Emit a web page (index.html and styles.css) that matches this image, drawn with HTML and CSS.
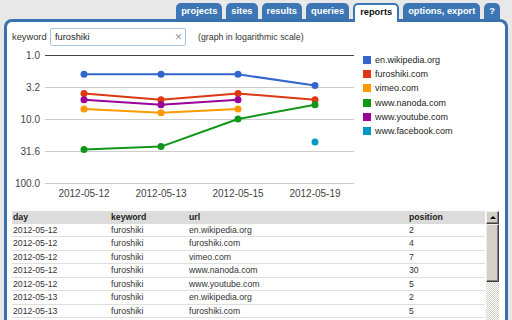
FILE: index.html
```html
<!DOCTYPE html>
<html>
<head>
<meta charset="utf-8">
<link rel="stylesheet" href="styles.css">
</head>
<body>
<div class="tabs">
  <div class="tab">projects</div>
  <div class="tab">sites</div>
  <div class="tab">results</div>
  <div class="tab">queries</div>
  <div class="tab active">reports</div>
  <div class="tab">options, export</div>
  <div class="tab">?</div>
</div>
<div class="panel">
  <div class="kwrow">
    <span class="kwlabel">keyword</span>
    <div class="input"><span class="val">furoshiki</span><span class="clear">×</span></div>
    <span class="note">(graph in logarithmic scale)</span>
  </div>
  <div class="chartrow">
    <svg class="chart" width="348" height="155" viewBox="7 48 348 155">
      <line x1="45" x2="354" y1="55.5" y2="55.5" stroke="#444" stroke-width="1"/>
      <line x1="45" x2="354" y1="87.5" y2="87.5" stroke="#ccc" stroke-width="1"/>
      <line x1="45" x2="354" y1="119.5" y2="119.5" stroke="#ccc" stroke-width="1"/>
      <line x1="45" x2="354" y1="151.5" y2="151.5" stroke="#ccc" stroke-width="1"/>
      <line x1="45" x2="354" y1="183.5" y2="183.5" stroke="#ccc" stroke-width="1"/>
      <g class="ylab" text-anchor="end">
        <text x="40" y="59">1.0</text>
        <text x="40" y="91">3.2</text>
        <text x="40" y="123">10.0</text>
        <text x="40" y="155">31.6</text>
        <text x="40" y="187">100.0</text>
      </g>
      <g class="xlab" text-anchor="middle">
        <text x="84" y="197">2012-05-12</text>
        <text x="161" y="197">2012-05-13</text>
        <text x="238" y="197">2012-05-15</text>
        <text x="315" y="197">2012-05-19</text>
      </g>
      <g fill="none" stroke-width="2" stroke-linejoin="round">
        <polyline stroke="#3366cc" points="84,74.3 161,74.3 238,74.3 315,85.5"/>
        <polyline stroke="#dc3912" points="84,93.5 161,99.7 238,93.5 315,99.7"/>
        <polyline stroke="#ff9900" points="84,109.1 161,112.8 238,109.1"/>
        <polyline stroke="#109618" points="84,149.5 161,146.6 238,119 315,104.8"/>
        <polyline stroke="#990099" points="84,99.7 161,104.8 238,99.7"/>
      </g>
      <g fill="#3366cc"><circle cx="84" cy="74.3" r="3.5"/><circle cx="161" cy="74.3" r="3.5"/><circle cx="238" cy="74.3" r="3.5"/><circle cx="315" cy="85.5" r="3.5"/></g>
      <g fill="#dc3912"><circle cx="84" cy="93.5" r="3.5"/><circle cx="161" cy="99.7" r="3.5"/><circle cx="238" cy="93.5" r="3.5"/><circle cx="315" cy="99.7" r="3.5"/></g>
      <g fill="#ff9900"><circle cx="84" cy="109.1" r="3.5"/><circle cx="161" cy="112.8" r="3.5"/><circle cx="238" cy="109.1" r="3.5"/></g>
      <g fill="#109618"><circle cx="84" cy="149.5" r="3.5"/><circle cx="161" cy="146.6" r="3.5"/><circle cx="238" cy="119" r="3.5"/><circle cx="315" cy="104.8" r="3.5"/></g>
      <g fill="#990099"><circle cx="84" cy="99.7" r="3.5"/><circle cx="161" cy="104.8" r="3.5"/><circle cx="238" cy="99.7" r="3.5"/></g>
      <g fill="#0099c6"><circle cx="315" cy="142" r="3.5"/></g>
    </svg>
    <div class="legend">
      <div class="item"><span class="sw c1"></span>en.wikipedia.org</div>
      <div class="item"><span class="sw c2"></span>furoshiki.com</div>
      <div class="item"><span class="sw c3"></span>vimeo.com</div>
      <div class="item"><span class="sw c4"></span>www.nanoda.com</div>
      <div class="item"><span class="sw c5"></span>www.youtube.com</div>
      <div class="item"><span class="sw c6"></span>www.facebook.com</div>
    </div>
  </div>
  <div class="tablewrap">
    <div class="tablebox">
      <table class="data">
        <thead>
          <tr><th class="cday">day</th><th class="ckw">keyword</th><th class="curl">url</th><th>position</th></tr>
        </thead>
        <tbody>
          <tr><td>2012-05-12</td><td>furoshiki</td><td>en.wikipedia.org</td><td>2</td></tr>
          <tr><td>2012-05-12</td><td>furoshiki</td><td>furoshiki.com</td><td>4</td></tr>
          <tr><td>2012-05-12</td><td>furoshiki</td><td>vimeo.com</td><td>7</td></tr>
          <tr><td>2012-05-12</td><td>furoshiki</td><td>www.nanoda.com</td><td>30</td></tr>
          <tr><td>2012-05-12</td><td>furoshiki</td><td>www.youtube.com</td><td>5</td></tr>
          <tr><td>2012-05-13</td><td>furoshiki</td><td>en.wikipedia.org</td><td>2</td></tr>
          <tr><td>2012-05-13</td><td>furoshiki</td><td>furoshiki.com</td><td>5</td></tr>
        </tbody>
      </table>
    </div>
    <div class="scrollbar">
      <div class="sbtn"><span class="arrow"></span></div>
      <div class="thumb"></div>
      <div class="track"></div>
    </div>
  </div>
</div>
</body>
</html>
```
FILE: styles.css
```css
html, body {
  margin: 0;
  padding: 0;
  height: 320px;
  overflow: hidden;
}
body {
  background: #e8e8e8;
  font-family: "Liberation Sans", Arial, sans-serif;
  color: #333;
}
.tabs {
  display: flex;
  justify-content: flex-end;
  align-items: flex-end;
  gap: 4px;
  padding: 3px 12px 0 0;
  height: 16px;
  position: relative;
  z-index: 2;
}
.tab {
  height: 16px;
  box-sizing: border-box;
  padding: 0 5px;
  background: #3d76b4;
  color: #fff;
  font-weight: bold;
  font-size: 9.3px;
  line-height: 16px;
  border-radius: 5px 5px 0 0;
}
.tab.active {
  background: #fff;
  color: #111;
  border: 2px solid #3d76b4;
  border-bottom: none;
  height: 19px;
  line-height: 15px;
  margin-bottom: -3px;
  padding: 0 5px;
}
.panel {
  margin: 0 4px;
  height: 301px;
  box-sizing: border-box;
  background: #fff;
  border: 3px solid #3a72ae;
  border-bottom: none;
  border-radius: 8px 8px 0 0;
  position: relative;
  z-index: 1;
}
.kwrow {
  display: flex;
  align-items: center;
  height: 18px;
  margin-top: 6px;
  padding-left: 5px;
  font-size: 9.3px;
  color: #333;
}
.kwlabel {
  width: 38px;
}
.input {
  width: 136px;
  height: 18px;
  box-sizing: border-box;
  border: 1px solid #a8c3df;
  border-radius: 2px;
  display: flex;
  align-items: center;
  justify-content: space-between;
  padding: 0 3px 0 4px;
  color: #222;
}
.clear {
  color: #999;
  font-size: 12px;
}
.note {
  margin-left: 12px;
  font-size: 8.8px;
}
.chartrow {
  display: flex;
  margin-top: 2px;
  height: 155px;
}
.chart {
  display: block;
  flex: none;
}
.ylab text, .xlab text {
  font-family: "Liberation Sans", Arial, sans-serif;
  font-size: 10px;
  fill: #444;
}
.legend {
  margin-left: 8px;
  padding-top: 5px;
  font-size: 9px;
  color: #222;
}
.item {
  display: flex;
  align-items: center;
  height: 14.2px;
}
.sw {
  width: 8px;
  height: 8px;
  margin-right: 4px;
  box-sizing: border-box;
}
.c1 { background: #3366cc; }
.c2 { background: #dc3912; }
.c3 { background: #ff9900; }
.c4 { background: #109618; }
.c5 { background: #990099; }
.c6 { background: #0099c6; }
.tablewrap {
  display: flex;
  margin: 8px 0 0 5px;
  width: 487px;
  height: 110px;
}
.tablebox {
  width: 474px;
  overflow: hidden;
}
.data {
  width: 473px;
  border-collapse: collapse;
  font-size: 8.7px;
  color: #333;
}
.data th {
  background: #dcdcdc;
  color: #222;
  text-align: left;
  font-weight: bold;
  height: 12.5px;
  padding: 0 0 0 1px;
  line-height: 12px;
}
.data td {
  height: 12.5px;
  padding: 0 0 0 1px;
  line-height: 12px;
  border-bottom: 1px solid #dedede;
}
.cday { width: 97px; }
.ckw { width: 77px; }
.curl { width: 219px; }
.scrollbar {
  width: 13px;
  display: flex;
  flex-direction: column;
}
.sbtn, .thumb {
  box-sizing: border-box;
  background: #d4d0c8;
  border-top: 1px solid #f0efeb;
  border-left: 1px solid #f0efeb;
  border-right: 1px solid #404040;
  border-bottom: 1px solid #404040;
  box-shadow: inset -1px -1px 0 #808080;
}
.sbtn {
  height: 13px;
  display: flex;
  align-items: center;
  justify-content: center;
}
.arrow {
  width: 0;
  height: 0;
  border-left: 3px solid transparent;
  border-right: 3px solid transparent;
  border-bottom: 3px solid #000;
  margin-bottom: 1px;
}
.thumb {
  height: 58px;
}
.track {
  flex: 1;
  background: repeating-conic-gradient(#d4d0c8 0 25%, #ffffff 0 50%) 0 0 / 2px 2px;
}
```
